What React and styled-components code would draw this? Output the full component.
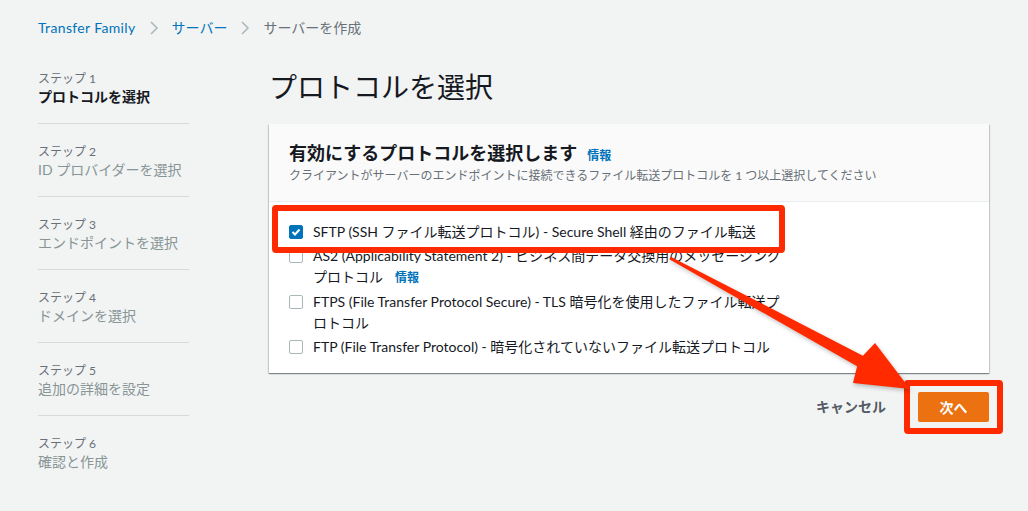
import React from "react";
import styled, { createGlobalStyle } from "styled-components";

const GlobalStyle = createGlobalStyle`
  html, body {
    margin: 0;
    padding: 0;
    background: #f2f3f3;
  }
  body {
    font-family: Lato, "Noto Sans CJK JP", sans-serif;
    color: #16191f;
    -webkit-font-smoothing: antialiased;
  }
`;

const Page = styled.div`
  position: relative;
  width: 1028px;
  height: 511px;
  box-sizing: border-box;
  padding: 18px 39px 0 38px;
  overflow: hidden;
`;

const Crumbs = styled.nav`
  display: flex;
  align-items: center;
  height: 20px;
  font-size: 14px;
  line-height: 20px;
`;

const Crumb = styled.span`
  color: ${(p) => (p.$current ? "#687078" : "#0073bb")};
  letter-spacing: ${(p) => p.$ls || 0}px;
`;

const Chevron = styled.svg`
  width: 10px;
  height: 14px;
  margin: 0 13px;
`;

const Layout = styled.div`
  display: grid;
  grid-template-columns: 151px 1fr;
  column-gap: 80px;
  margin-top: 31px;
`;

const Steps = styled.ol`
  list-style: none;
  margin: 0;
  padding: 0;
`;

const Step = styled.li`
  display: flex;
  flex-direction: column;
  padding: ${(p) => (p.$first ? "0" : "18px")} 0 16px;
  border-top: ${(p) => (p.$first ? "none" : "1px solid #d5dbdb")};
`;

const StepLabel = styled.span`
  margin-top: 2px;
  font-size: 12px;
  line-height: 16px;
  color: #687078;
`;

const StepTitle = styled.span`
  font-size: 14px;
  line-height: 20px;
  font-weight: ${(p) => (p.$active ? 700 : 400)};
  color: ${(p) => (p.$active ? "#16191f" : "#879596")};
`;

const Main = styled.main`
  display: flex;
  flex-direction: column;
`;

const Title = styled.h1`
  margin: 1px 0 20px;
  font-size: 28px;
  line-height: 34px;
  font-weight: 400;
  color: #16191f;
`;

const Card = styled.section`
  background: #ffffff;
  box-shadow: 0 1px 1px 0 rgba(0, 28, 36, 0.3),
    1px 1px 1px 0 rgba(0, 28, 36, 0.15), -1px 1px 1px 0 rgba(0, 28, 36, 0.15);
`;

const CardHeader = styled.header`
  background: #fafafa;
  border-bottom: 1px solid #eaeded;
  padding: 18px 20px 17px;
`;

const CardTitle = styled.h2`
  display: flex;
  align-items: baseline;
  gap: 10px;
  margin: 0;
  font-size: 18px;
  line-height: 22px;
  font-weight: 700;
  color: #16191f;
`;

const Info = styled.a`
  font-size: 12px;
  font-weight: 700;
  color: #0073bb;
  text-decoration: none;
  margin-left: ${(p) => p.$ml || 0}px;
`;

const CardDesc = styled.p`
  margin: 1px 0 0;
  font-size: 12px;
  line-height: 16px;
  color: #687078;
`;

const CardBody = styled.div`
  display: flex;
  flex-direction: column;
  gap: 3px;
  padding: 19px 20px 16px;
`;

const Option = styled.label`
  position: relative;
  display: flex;
  align-items: flex-start;
  gap: 10px;
  font-size: 14px;
  line-height: 21px;
  color: #16191f;
`;

const Highlight = styled.span`
  position: absolute;
  left: -17px;
  top: -16px;
  width: 513px;
  bottom: -11px;
  box-sizing: border-box;
  border: 6px solid #ff2a00;
  border-radius: 4px;
  pointer-events: none;
  z-index: 2;
`;

const Box = styled.span`
  flex: none;
  width: 14px;
  height: 14px;
  margin-top: 4px;
  box-sizing: border-box;
  border-radius: 2px;
  border: 1px solid ${(p) => (p.$checked ? "#0073bb" : "#aab7b8")};
  background: ${(p) => (p.$checked ? "#0073bb" : "#ffffff")};
  display: flex;
  align-items: center;
  justify-content: center;
`;

const OptionText = styled.span`
  max-width: 480px;
`;

const Actions = styled.div`
  display: flex;
  justify-content: flex-end;
  align-items: center;
  gap: 32px;
  margin-top: 19px;
`;

const Cancel = styled.button`
  border: none;
  background: none;
  padding: 0;
  font-family: inherit;
  font-size: 14px;
  line-height: 20px;
  font-weight: 700;
  color: #545b64;
`;

const Primary = styled.button`
  position: relative;
  width: 71px;
  height: 30px;
  border: none;
  border-radius: 2px;
  background: #ec7211;
  color: #ffffff;
  font-family: inherit;
  font-size: 14px;
  font-weight: 700;
  &::after {
    content: "";
    position: absolute;
    left: -14px;
    right: -14px;
    top: -12px;
    bottom: -12px;
    border: 6px solid #ff2a00;
    border-radius: 4px;
  }
`;

const Arrow = styled.svg`
  position: absolute;
  left: 0;
  top: 0;
  width: 1028px;
  height: 511px;
  pointer-events: none;
  z-index: 3;
  filter: drop-shadow(1px 2px 2px rgba(0, 0, 0, 0.25));
`;

const ChevronIcon = () => (
  <Chevron viewBox="0 0 10 14">
    <polyline points="2,1 8,7 2,13" fill="none" stroke="#aab7b8" strokeWidth="1.5" />
  </Chevron>
);

const steps = [
  "プロトコルを選択",
  "ID プロバイダーを選択",
  "エンドポイントを選択",
  "ドメインを選択",
  "追加の詳細を設定",
  "確認と作成",
];

const options = [
  { text: "SFTP (SSH ファイル転送プロトコル) - Secure Shell 経由のファイル転送", checked: true },
  { text: "AS2 (Applicability Statement 2) - ビジネス間データ交換用のメッセージングプロトコル", info: true },
  { text: "FTPS (File Transfer Protocol Secure) - TLS 暗号化を使用したファイル転送プロトコル" },
  { text: "FTP (File Transfer Protocol) - 暗号化されていないファイル転送プロトコル" },
];

export default function App() {
  return (
    <Page>
      <GlobalStyle />
      <Crumbs>
        <Crumb $ls={0.35}>Transfer Family</Crumb>
        <ChevronIcon />
        <Crumb>サーバー</Crumb>
        <ChevronIcon />
        <Crumb $current>サーバーを作成</Crumb>
      </Crumbs>
      <Layout>
        <Steps>
          {steps.map((s, i) => (
            <Step key={s} $first={i === 0}>
              <StepLabel>ステップ {i + 1}</StepLabel>
              <StepTitle $active={i === 0}>{s}</StepTitle>
            </Step>
          ))}
        </Steps>
        <Main>
          <Title>プロトコルを選択</Title>
          <Card>
            <CardHeader>
              <CardTitle>
                有効にするプロトコルを選択します
                <Info href="#">情報</Info>
              </CardTitle>
              <CardDesc>
                クライアントがサーバーのエンドポイントに接続できるファイル転送プロトコルを 1 つ以上選択してください
              </CardDesc>
            </CardHeader>
            <CardBody>
              {options.map((o) => (
                <Option key={o.text}>
                  {o.checked && <Highlight />}
                  <Box $checked={o.checked}>
                    {o.checked && (
                      <svg width="10" height="10" viewBox="0 0 10 10">
                        <polyline points="1.5,5 4,7.5 8.5,2.5" fill="none" stroke="#fff" strokeWidth="2" />
                      </svg>
                    )}
                  </Box>
                  <OptionText>
                    {o.text}
                    {o.info && <Info href="#" $ml={12}>情報</Info>}
                  </OptionText>
                </Option>
              ))}
            </CardBody>
          </Card>
          <Actions>
            <Cancel>キャンセル</Cancel>
            <Primary>次へ</Primary>
          </Actions>
        </Main>
      </Layout>
      <Arrow viewBox="0 0 1028 511">
        <polygon
          fill="#ff2a00"
          points="670.7,256.7 862.9,355.7 875,343 910,389 853,383 857.1,366.3 669.3,259.3"
        />
      </Arrow>
    </Page>
  );
}
